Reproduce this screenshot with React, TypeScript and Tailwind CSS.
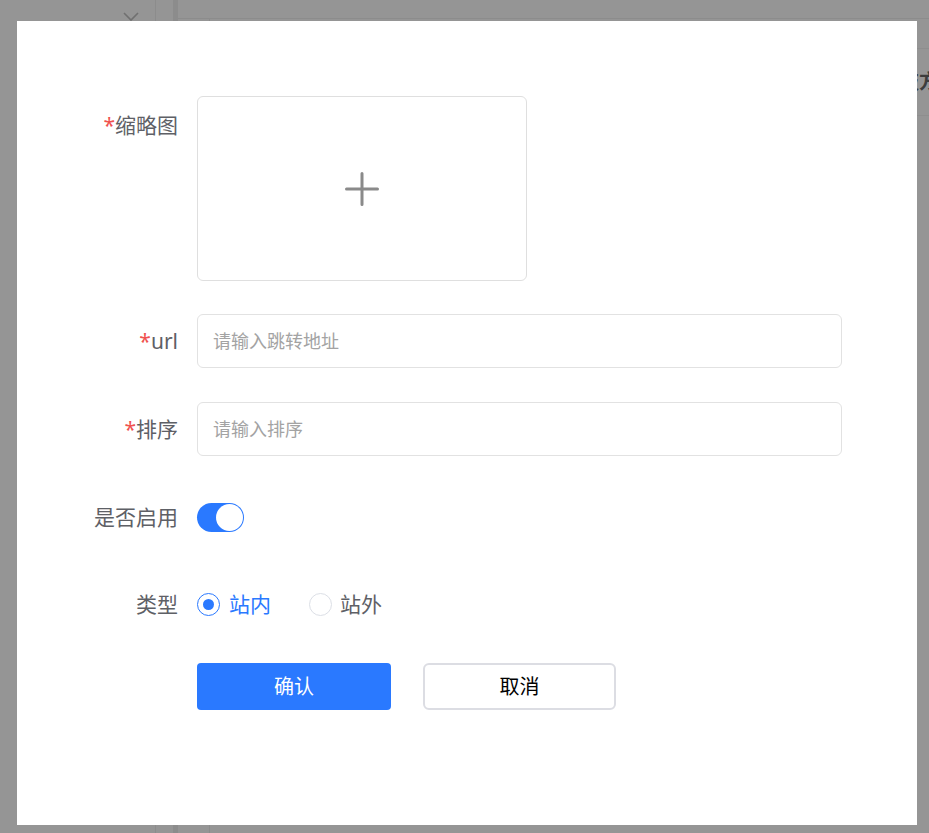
import React from "react";

const font = { fontFamily: '"Noto Sans", "Noto Sans CJK SC", sans-serif' };

function Label({ text, required }: { text: string; required?: boolean }) {
  return (
    <div className="w-[161px] shrink-0 text-right text-[21px] text-[#5e6066] leading-[54px] pr-0">
      {required && <span className="text-[#f0524f]">*</span>}
      {text}
    </div>
  );
}

export default function App() {
  return (
    <div className="relative w-[929px] h-[833px] overflow-hidden bg-[#959595]" style={font}>
      {/* background page (dimmed) */}
      <div className="flex h-full">
        <div className="w-[156px] shrink-0 border-r border-[#8c8c8c] flex justify-end pr-[16px] pt-[12px]">
          <svg width="16" height="10" viewBox="0 0 16 10" className="mt-0">
            <path d="M1 1 L8 8 L15 1" fill="none" stroke="#707070" strokeWidth="1.6" />
          </svg>
        </div>
        <div className="w-[17px] shrink-0" />
        <div className="w-[5px] shrink-0 bg-[#8c8c8c]" />
        <div className="flex-1 flex flex-col">
          <div className="h-[19px] border-b border-[#8c8c8c]" />
          <div className="flex-1 flex">
            <div className="w-[31px]" />
            <div className="flex-1 border-l border-[#8c8c8c] flex flex-col overflow-hidden">
              <div className="h-[30px] border-b border-[#8e8e8e]" />
              <div className="h-[67px] border-b border-[#8e8e8e] flex items-center pl-[689px]">
                <span className="text-[20px] font-bold text-[#3d3d3d] whitespace-nowrap">技方</span>
              </div>
            </div>
          </div>
        </div>
      </div>

      {/* modal */}
      <div className="absolute left-[17px] top-[21px] w-[900px] h-[804px] bg-white pt-[75px]">
        <div className="flex flex-col">
          {/* thumbnail */}
          <div className="flex items-start">
            <div className="pt-[2px]">
              <Label text="缩略图" required />
            </div>
            <div className="ml-[19px] w-[330px] h-[185px] rounded-[6px] border border-[#dfdfdf] flex items-center justify-center">
              <svg width="34" height="34" viewBox="0 0 34 34">
                <path d="M17 1.5 V32.5 M1.5 17 H32.5" stroke="#8a8a8a" strokeWidth="3" strokeLinecap="round" />
              </svg>
            </div>
          </div>

          {/* url */}
          <div className="flex items-center mt-[33px]">
            <Label text="url" required />
            <div className="ml-[19px] w-[645px] h-[54px] rounded-[6px] border border-[#e2e2e2] flex items-center px-[15px]">
              <span className="text-[18px] text-[#a3a3a3]">请输入跳转地址</span>
            </div>
          </div>

          {/* sort */}
          <div className="flex items-center mt-[34px]">
            <Label text="排序" required />
            <div className="ml-[19px] w-[645px] h-[54px] rounded-[6px] border border-[#e2e2e2] flex items-center px-[15px]">
              <span className="text-[18px] text-[#a3a3a3]">请输入排序</span>
            </div>
          </div>

          {/* enable */}
          <div className="flex items-center mt-[34px]">
            <Label text="是否启用" />
            <div className="ml-[19px] w-[47px] h-[29px] rounded-full bg-[#2a79ff] flex items-center justify-end p-[1px]">
              <div className="w-[27px] h-[27px] rounded-full bg-white" />
            </div>
          </div>

          {/* type */}
          <div className="flex items-center mt-[33px]">
            <Label text="类型" />
            <div className="ml-[19px] flex items-center">
              <div className="w-[23px] h-[23px] rounded-full border border-[#2a79ff] flex items-center justify-center">
                <div className="w-[11px] h-[11px] rounded-full bg-[#2a79ff]" />
              </div>
              <span className="ml-[9px] text-[21px] text-[#2a79ff] leading-[54px]">站内</span>
              <div className="ml-[38px] w-[23px] h-[23px] rounded-full border border-[#dcdfe6]" />
              <span className="ml-[8px] text-[21px] text-[#5e6066] leading-[54px]">站外</span>
            </div>
          </div>

          {/* buttons */}
          <div className="flex items-center mt-[32px] pl-[180px]">
            <button className="w-[194px] h-[47px] rounded-[4px] bg-[#2a79ff] text-white text-[20px]">确认</button>
            <button className="ml-[32px] w-[193px] h-[47px] rounded-[6px] border-2 border-[#dcdde3] bg-white text-black text-[20px]">取消</button>
          </div>
        </div>
      </div>
    </div>
  );
}
